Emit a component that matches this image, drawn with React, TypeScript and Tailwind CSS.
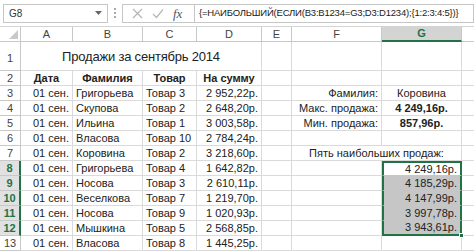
import React from 'react';

type Row = [string, string, string, string];

const rows: Row[] = [
  ['01 сен.', 'Григорьева', 'Товар 3', '2 952,22р.'],
  ['01 сен.', 'Скупова', 'Товар 2', '2 648,20р.'],
  ['01 сен.', 'Ильина', 'Товар 1', '3 003,58р.'],
  ['01 сен.', 'Власова', 'Товар 10', '2 784,24р.'],
  ['01 сен.', 'Коровина', 'Товар 2', '3 218,60р.'],
  ['01 сен.', 'Григорьева', 'Товар 4', '1 642,82р.'],
  ['01 сен.', 'Носова', 'Товар 3', '2 610,11р.'],
  ['01 сен.', 'Веселкова', 'Товар 7', '1 219,70р.'],
  ['01 сен.', 'Носова', 'Товар 9', '1 020,93р.'],
  ['01 сен.', 'Мышкина', 'Товар 5', '2 568,85р.'],
  ['01 сен.', 'Власова', 'Товар 8', '1 445,25р.'],
];

// F / G contents keyed by row number
const side: Record<number, { f?: React.ReactNode; g?: React.ReactNode; span?: string }> = {
  3: { f: 'Фамилия:', g: <span>Коровина</span> },
  4: { f: 'Макс. продажа:', g: <b>4 249,16р.</b> },
  5: { f: 'Мин. продажа:', g: <b>857,96р.</b> },
  7: { span: 'Пять наибольших продаж:' },
};

const top5 = ['4 249,16р.', '4 185,29р.', '4 147,99р.', '3 997,78р.', '3 943,61р.'];

const cell = 'border-r border-b border-[#dadada] px-[3px] flex items-center whitespace-nowrap overflow-hidden';
const rowHead = 'border-r border-b border-[#c8c8c8] flex items-center justify-center text-[#444]';
const edge = 'border-b border-[#dadada]';

const App: React.FC = () => {
  return (
    <div className="w-[474px] h-[251px] overflow-hidden bg-white text-[11px] text-[#222] font-['Liberation_Sans',Arial,sans-serif]">
      {/* Formula bar */}
      <div className="h-[27px] flex items-center pl-[3px] border-b border-[#d4d4d4]">
        <div className="w-[105px] h-[19px] border border-[#c6c6c6] flex items-center justify-between pl-[5px] pr-[5px] text-[10px] text-[#333]">
          <span>G8</span>
          <svg width="7" height="4" viewBox="0 0 7 4"><path d="M0 0h7L3.5 4z" fill="#666" /></svg>
        </div>
        <div className="w-[14px] flex flex-col items-center gap-[2px]">
          <span className="w-[2px] h-[2px] bg-[#aaa]" />
          <span className="w-[2px] h-[2px] bg-[#aaa]" />
          <span className="w-[2px] h-[2px] bg-[#aaa]" />
        </div>
        <div className="w-[72px] h-[19px] border border-[#c6c6c6] border-r-0 flex items-center gap-[9px] pl-[9px]">
          <svg width="11" height="11" viewBox="0 0 11 11"><path d="M1 1l9 9M10 1l-9 9" stroke="#b5b5b5" strokeWidth="1.2" /></svg>
          <svg width="12" height="11" viewBox="0 0 12 11"><path d="M1 6l3.5 3.5L11 1.5" stroke="#b5b5b5" strokeWidth="1.2" fill="none" /></svg>
          <span className="font-['Liberation_Serif',serif] italic text-[13px] text-[#555] leading-none">fx</span>
        </div>
        <div className="flex-1 h-[19px] border border-[#c6c6c6] flex items-center pl-[4px] text-[9.5px] tracking-[-0.2px] text-[#222] whitespace-nowrap overflow-hidden">
          {'{=НАИБОЛЬШИЙ(ЕСЛИ(B3:B1234=G3;D3:D1234);{1:2:3:4:5})}'}
        </div>
      </div>

      {/* Sheet grid */}
      <div className="grid grid-cols-[21px_52px_70px_54px_65px_30px_90px_80px_12px] grid-rows-[15px_29px_repeat(12,15px)]">
        {/* column headers */}
        <div className="border-r border-b border-[#c8c8c8] relative bg-white">
          <svg className="absolute right-[2px] bottom-[2px]" width="9" height="9" viewBox="0 0 9 9"><path d="M9 0v9H0z" fill="#c9c9c9" /></svg>
        </div>
        {['A', 'B', 'C', 'D', 'E', 'F'].map((c) => (
          <div key={c} className="border-r border-b border-[#c8c8c8] flex items-center justify-center text-[#444]">{c}</div>
        ))}
        <div className="border-r border-[#c8c8c8] border-b-2 border-b-[#217346] bg-[#d4d4d4] flex items-center justify-center font-bold text-[#217346]">G</div>
        <div className="border-b border-[#c8c8c8]" />

        {/* row 1 */}
        <div className={rowHead + ' items-end pb-[4px]'}>1</div>
        <div className={cell + ' col-span-4 justify-center text-[13px] tracking-[-0.2px] pt-[1px]'}>Продажи за сентябрь 2014</div>
        <div className={cell} />
        <div className={cell} />
        <div className={cell} />
        <div className={edge} />

        {/* row 2 */}
        <div className={rowHead}>2</div>
        <div className={cell + ' justify-center font-bold'}>Дата</div>
        <div className={cell + ' justify-center font-bold'}>Фамилия</div>
        <div className={cell + ' justify-center font-bold'}>Товар</div>
        <div className={cell + ' justify-center font-bold'}>На сумму</div>
        <div className={cell} />
        <div className={cell} />
        <div className={cell} />
        <div className={edge} />

        {rows.map((r, i) => {
          const n = i + 3;
          const sel = n >= 8 && n <= 12;
          const s = side[n];
          const k = n - 8;
          return (
            <React.Fragment key={n}>
              <div
                className={
                  sel
                    ? 'border-r-2 border-r-[#217346] border-b border-b-[#c8c8c8] bg-[#e1e1e1] flex items-center justify-center font-bold text-[#217346]'
                    : rowHead
                }
              >
                {n}
              </div>
              <div className={cell + ' justify-end'}>{r[0]}</div>
              <div className={cell}>{r[1]}</div>
              <div className={cell}>{r[2]}</div>
              <div className={cell + ' justify-end'}>{r[3]}</div>
              <div className={cell} />
              {s?.span ? (
                <div className={cell + ' col-span-2 justify-center'}>{s.span}</div>
              ) : (
                <>
                  <div className={cell + ' justify-end'}>{s?.f}</div>
                  {sel ? (
                    <div
                      className={
                        'relative flex items-center justify-end px-[3px] border-x-2 border-[#217346] ' +
                        (k === 0 ? 'border-t-2 bg-white ' : 'bg-[#c6c6c6] ') +
                        (k === 4 ? 'border-b-2' : 'border-b border-b-[#c6c6c6]')
                      }
                    >
                      {top5[k]}
                      {k === 4 && (
                        <span className="absolute right-[-4px] bottom-[-4px] w-[5px] h-[5px] bg-[#217346] border border-white" />
                      )}
                    </div>
                  ) : (
                    <div className={cell + ' justify-center'}>{s?.g}</div>
                  )}
                </>
              )}
              <div className={edge} />
            </React.Fragment>
          );
        })}
      </div>
    </div>
  );
};

export default App;
